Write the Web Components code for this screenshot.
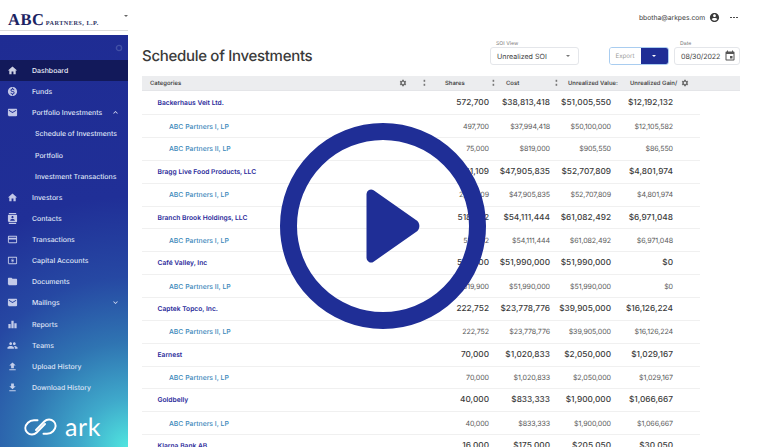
<!DOCTYPE html>
<html lang="en"><head><meta charset="utf-8"><title>Schedule of Investments</title>
<style>
html,body{margin:0;height:447px;overflow:hidden;background:#fff;font-family:Inter,"Liberation Sans",sans-serif;text-rendering:geometricPrecision}
</style></head><body>
<app-shell></app-shell>
<script>
const P={
home:'M10 20v-6h4v6h5v-8h3L12 3 2 12h3v8z',
money:'M12 2C6.48 2 2 6.48 2 12s4.48 10 10 10 10-4.48 10-10S17.52 2 12 2zm1.41 16.09V20h-2.67v-1.93c-1.71-.36-3.16-1.46-3.27-3.4h1.96c.1 1.05.82 1.87 2.65 1.87 1.96 0 2.4-.98 2.4-1.59 0-.83-.44-1.61-2.67-2.14-2.48-.6-4.18-1.62-4.18-3.67 0-1.72 1.39-2.84 3.11-3.21V4h2.67v1.95c1.86.45 2.79 1.86 2.85 3.39H14.3c-.05-1.11-.64-1.87-2.22-1.87-1.5 0-2.4.68-2.4 1.64 0 .84.65 1.39 2.67 1.91s4.18 1.39 4.18 3.91c-.01 1.83-1.38 2.83-3.12 3.16z',
mail:'M20 4H4c-1.1 0-1.99.9-1.99 2L2 18c0 1.1.9 2 2 2h16c1.1 0 2-.9 2-2V6c0-1.1-.9-2-2-2zm0 4l-8 5-8-5V6l8 5 8-5v2z',
contacts:'M20 0H4v2h16V0zM4 24h16v-2H4v2zM20 4H4c-1.1 0-2 .9-2 2v12c0 1.1.9 2 2 2h16c1.1 0 2-.9 2-2V6c0-1.1-.9-2-2-2zm-8 2.75c1.24 0 2.25 1.01 2.25 2.25s-1.01 2.25-2.25 2.25S9.75 10.24 9.75 9 10.76 6.75 12 6.75zM17 17H7v-1.5c0-1.67 3.33-2.5 5-2.5s5 .83 5 2.5V17z',
card:'M20 4H4c-1.11 0-1.99.89-1.99 2L2 18c0 1.11.89 2 2 2h16c1.11 0 2-.89 2-2V6c0-1.11-.89-2-2-2zm0 14H4v-6h16v6zm0-10H4V6h16v2z',
account:'M2 6v12c0 1.1.9 2 2 2h16c1.1 0 2-.9 2-2V6c0-1.1-.9-2-2-2H4c-1.1 0-2 .9-2 2zm2 0h16v12H4V6zm7 2v1.1c-1.1.2-2 .9-2 2 0 1.3 1.1 1.7 2.4 2 .9.2 1.2.4 1.2.8s-.5.6-1.1.6c-.8 0-1.2-.4-1.3-.9H9c.1 1 .9 1.7 2 1.9V16h2v-1.1c1.1-.2 2-.9 2-2 0-1.4-1.2-1.8-2.4-2.1-.9-.2-1.2-.4-1.2-.7s.4-.6 1-.6c.7 0 1 .3 1.1.8h1.3c-.1-1-.8-1.6-1.8-1.8V8h-2z',
folder:'M10 4H4c-1.1 0-1.99.9-1.99 2L2 18c0 1.1.9 2 2 2h16c1.1 0 2-.9 2-2V8c0-1.1-.9-2-2-2h-8l-2-2z',
bars:'M3 11h5v9H3zM9.5 4h5v16h-5zM16 9h5v11h-5z',
teams:'M16 11c1.66 0 2.99-1.34 2.99-3S17.66 5 16 5c-1.66 0-3 1.34-3 3s1.34 3 3 3zm-8 0c1.66 0 2.99-1.34 2.99-3S9.66 5 8 5C6.34 5 5 6.34 5 8s1.34 3 3 3zm0 2c-2.33 0-7 1.17-7 3.5V19h14v-2.5c0-2.33-4.67-3.5-7-3.5zm8 0c-.29 0-.62.02-.97.05 1.16.84 1.97 1.97 1.97 3.45V19h6v-2.5c0-2.33-4.67-3.5-7-3.5z',
upload:'M9 16h6v-6h4l-7-7-7 7h4zm-4 2h14v2H5z',
download:'M19 9h-4V3H9v6H5l7 7 7-7zM5 18v2h14v-2H5z',
user:'M12 2C6.48 2 2 6.48 2 12s4.48 10 10 10 10-4.48 10-10S17.52 2 12 2zm0 3c1.66 0 3 1.34 3 3s-1.34 3-3 3-3-1.34-3-3 1.34-3 3-3zm0 14.2c-2.5 0-4.71-1.28-6-3.22.03-1.99 4-3.08 6-3.08 1.99 0 5.97 1.09 6 3.08-1.29 1.94-3.5 3.22-6 3.22z',
cal:'M17 12h-5v5h5v-5zM16 1v2H8V1H6v2H5c-1.11 0-1.99.9-1.99 2L3 19c0 1.1.89 2 2 2h14c1.1 0 2-.9 2-2V5c0-1.1-.9-2-2-2h-1V1h-2zm3 18H5V8h14v11z',
gear:'M19.43 12.98c.04-.32.07-.64.07-.98s-.03-.66-.07-.98l2.11-1.65c.19-.15.24-.42.12-.64l-2-3.46c-.12-.22-.39-.3-.61-.22l-2.49 1c-.52-.4-1.08-.73-1.69-.98l-.38-2.65C14.46 2.18 14.25 2 14 2h-4c-.25 0-.46.18-.49.42l-.38 2.65c-.61.25-1.17.59-1.69.98l-2.49-1c-.23-.09-.49 0-.61.22l-2 3.46c-.13.22-.07.49.12.64l2.11 1.65c-.04.32-.07.65-.07.98s.03.66.07.98l-2.11 1.65c-.19.15-.24.42-.12.64l2 3.46c.12.22.39.3.61.22l2.49-1c.52.4 1.08.73 1.69.98l.38 2.65c.03.24.24.42.49.42h4c.25 0 .46-.18.49-.42l.38-2.65c.61-.25 1.17-.59 1.69-.98l2.49 1c.23.09.49 0 .61-.22l2-3.46c.12-.22.07-.49-.12-.64l-2.11-1.65zM12 15.5c-1.93 0-3.5-1.57-3.5-3.5s1.57-3.5 3.5-3.5 3.5 1.57 3.5 3.5-1.57 3.5-3.5 3.5z',
up:'M7.4 15.4 12 10.8l4.6 4.6L18 14l-6-6-6 6z',
down:'M7.4 8.6 12 13.2l4.6-4.6L18 10l-6 6-6-6z'
};
const ico=(n,s,c='currentColor',extra='')=>`<svg width="${s}" height="${s}" viewBox="0 0 24 24" fill="${c}" style="display:block;flex:none;${extra}"><path d="${P[n]}"/></svg>`;
const dots=(c='#777')=>`<svg width="3" height="8" viewBox="0 0 3 8" style="display:block;flex:none"><rect x=".6" y=".8" width="1.6" height="2" fill="${c}"/><rect x=".6" y="4.8" width="1.6" height="2" fill="${c}"/></svg>`;
const def=(name,css,html)=>customElements.define(name,class extends HTMLElement{
  connectedCallback(){ if(this.shadowRoot)return; const r=this.attachShadow({mode:'open'});
    r.innerHTML=`<style>${css}</style>`+(typeof html==='function'?html(this):html); }
});

def('abc-logo',`:host{display:flex;align-items:baseline;color:#1b2362;font-family:"Liberation Serif",serif;white-space:nowrap}
.a{font-size:16.5px;font-weight:700;letter-spacing:.6px}.b{font-size:6.2px;font-weight:700;letter-spacing:.5px;margin-left:1px;color:#2a2f5e}`,
`<span class="a">ABC</span><span class="b">PARTNERS, L.P.</span>`);

def('nav-item',`:host{display:flex;flex:none;align-items:center;height:21.13px;color:#dfe3f6;font-size:6.95px;font-weight:500;box-sizing:border-box;white-space:nowrap}
:host([active]){background:#12195a;color:#eef0fb}
.i{width:32px;display:flex;justify-content:center;padding-right:7px;box-sizing:border-box;opacity:.85}
:host([sub]) .i{width:35px}
.t{flex:1}.c{margin-right:8px;display:block}`,
h=>`<span class="i">${h.hasAttribute('icon')?ico(h.getAttribute('icon'),11):''}</span><span class="t"><slot></slot></span>${h.hasAttribute('chev')?`<span class="c">${ico(h.getAttribute('chev'),9)}</span>`:''}`);

def('side-nav',`:host{display:flex;flex-direction:column;width:128px;flex:none;color:#fff;position:relative;overflow:hidden;
background:radial-gradient(circle at 100% 100%,#50e5df 0,#3fa9cb 48px,#2f74b2 105px,#2648a3 170px,#202f97 250px,#1f2c93 100%)}
.collapse{height:25px;flex:none;display:flex;justify-content:flex-end;align-items:center;padding:0 5px 0 0;box-sizing:border-box}
.collapse svg{display:block}
.brand{margin-top:auto;display:flex;align-items:center;gap:8px;padding:0 0 9px 24px}
.ark{font-family:Lato,sans-serif;font-size:25px;font-weight:400;line-height:22px;letter-spacing:.6px;color:#fff}`,
`<div class="collapse"><svg width="8" height="8" viewBox="0 0 8 8"><circle cx="4" cy="4" r="2.6" fill="none" stroke="#4250a6" stroke-width="1.4"/></svg></div>
<nav-item active icon="home">Dashboard</nav-item>
<nav-item icon="money">Funds</nav-item>
<nav-item icon="mail" chev="up">Portfolio Investments</nav-item>
<nav-item sub>Schedule of Investments</nav-item>
<nav-item sub>Portfolio</nav-item>
<nav-item sub>Investment Transactions</nav-item>
<nav-item icon="home">Investors</nav-item>
<nav-item icon="contacts">Contacts</nav-item>
<nav-item icon="card">Transactions</nav-item>
<nav-item icon="account">Capital Accounts</nav-item>
<nav-item icon="folder">Documents</nav-item>
<nav-item icon="mail" chev="down">Mailings</nav-item>
<nav-item icon="bars">Reports</nav-item>
<nav-item icon="teams">Teams</nav-item>
<nav-item icon="upload">Upload History</nav-item>
<nav-item icon="download">Download History</nav-item>
<div class="brand"><svg width="33" height="20" viewBox="0 0 33 20" fill="none" stroke="#fff" stroke-width="2" stroke-linecap="round"><path d="M13.5 3.200H10a8.600 8.600 0 0 0-6.100 2.600c-3.300 3.300-3.300 7.100-.6 9.800 2.700 2.700 6.700 2.600 9.400-.1L21 7"/><path d="M19.500 16.800H23a8.600 8.600 0 0 0 6.100-2.600c3.300-3.300 3.300-7.100.6-9.800-2.700-2.700-6.700-2.600-9.400.1L12 13"/></svg><span class="ark">ark</span></div>`);

def('side-head',`:host{display:flex;height:35px;width:128px;flex:none;box-sizing:border-box}
.in{flex:none;width:128px;height:31px;border-bottom:1px solid #dcdcdc;display:flex;align-items:center;padding:10px 0 0 8px;box-sizing:border-box;justify-content:space-between}
.caret{width:0;height:0;border:2px solid transparent;border-top:2.5px solid #666;margin:0 0 6px 0}`,
`<div class="in"><abc-logo></abc-logo><span class="caret"></span></div>`);

def('top-bar',`:host{display:flex;flex:none;justify-content:flex-end;align-items:center;gap:4px;height:35px;padding:0 30px 0 0;box-sizing:border-box;color:#3b3b3b;font-size:6.75px}
.more{margin-left:5.500px;display:flex;gap:1.300px}
.more i{display:block;width:1.900px;height:1.900px;border-radius:50%;background:#333}`,
`<span class="mail">bbotha@arkpes.com</span>${ico('user',11,'#3a3a3a')}<span class="more"><i></i><i></i><i></i></span>`);

def('field-box',`:host{display:block;position:relative;box-sizing:border-box;height:18px;border:1px solid #e4e6ea;border-radius:3px;background:#fff;font-size:7.1px;color:#444}
.lab{position:absolute;left:5px;top:-7.500px;font-size:5.200px;color:#777;line-height:6px}
.b{display:flex;align-items:center;height:100%;padding:0 3px 0 5px;box-sizing:border-box;justify-content:space-between}`,
h=>`<span class="lab">${h.getAttribute('label')}</span><div class="b"><slot></slot></div>`);

def('export-btn',`:host{display:flex;height:18px;width:60px;border-radius:3px;box-sizing:border-box;border:1px solid #a9cdf0;overflow:hidden;font-size:6.200px;color:#9a9a9a}
.l{flex:1;display:flex;align-items:center;justify-content:center;background:#fff}
.r{width:27px;background:#1f2e96;display:flex;align-items:center;justify-content:center}
.r i{display:block;border:2.300px solid transparent;border-top:2.600px solid #fff;margin-top:2.500px}`,
`<span class="l">Export</span><span class="r"><i></i></span>`);

def('page-toolbar',`:host{display:flex;flex:none;align-items:flex-start;height:40.500px;box-sizing:border-box;padding:12px 28px 0 14px}
h1{margin:0;font-size:15px;letter-spacing:-.3px;font-weight:500;color:#3a3a3a;line-height:18px;flex:1}
.sel{width:89px;margin-right:29.500px}.date{width:66px;margin-left:5.500px}
.sel span:first-child{padding-left:1px}
.ct{display:block;border:2.100px solid transparent;border-top:2.500px solid #777;margin:2px 5px 0 0}
.d{letter-spacing:-.1px;padding-left:1px}
field-box span{white-space:nowrap}`,
`<h1>Schedule of Investments</h1>
<field-box class="sel" label="SOI View"><span>Unrealized SOI</span><span class="ct"></span></field-box>
<export-btn></export-btn>
<field-box class="date" label="Date"><span class="d">08/30/2022</span>${ico('cal',12,'#555')}</field-box>`);

def('table-row',`:host{display:grid;grid-template-columns:1fr 61px 61px 61px 62px;align-items:center;height:22.870px;padding-right:27px;box-sizing:border-box;width:558px;border-bottom:1px solid #f0f0f0;white-space:nowrap}
.n{padding-left:15.500px;font-size:6.700px;font-weight:600;color:#2a2a9a}
.v{text-align:right;font-size:8.300px;font-weight:500;color:#3c3c3c}
:host([child]) .n{padding-left:27px;font-weight:500;font-size:6.850px;color:#3a87ba}
:host([child]) .v{font-size:7.100px;letter-spacing:-.1px;font-weight:400;color:#5a5a5a}`,
h=>{const d=h.getAttribute('d').split('|');return `<span class="n">${d[0]}</span>`+d.slice(1).map(x=>`<span class="v">${x}</span>`).join('')});

const ROWS=[
['Backerhaus Veit Ltd.','572,700','$38,813,418','$51,005,550','$12,192,132'],
['*ABC Partners I, LP','497,700','$37,994,418','$50,100,000','$12,105,582'],
['*ABC Partners II, LP','75,000','$819,000','$905,550','$86,550'],
['Bragg Live Food Products, LLC','2,351,109','$47,905,835','$52,707,809','$4,801,974'],
['*ABC Partners I, LP','2,351,109','$47,905,835','$52,707,809','$4,801,974'],
['Branch Brook Holdings, LLC','518,252','$54,111,444','$61,082,492','$6,971,048'],
['*ABC Partners I, LP','518,252','$54,111,444','$61,082,492','$6,971,048'],
['Café Valley, Inc','519,900','$51,990,000','$51,990,000','$0'],
['*ABC Partners II, LP','519,900','$51,990,000','$51,990,000','$0'],
['Captek Topco, Inc.','222,752','$23,778,776','$39,905,000','$16,126,224'],
['*ABC Partners II, LP','222,752','$23,778,776','$39,905,000','$16,126,224'],
['Earnest','70,000','$1,020,833','$2,050,000','$1,029,167'],
['*ABC Partners I, LP','70,000','$1,020,833','$2,050,000','$1,029,167'],
['Goldbelly','40,000','$833,333','$1,900,000','$1,066,667'],
['*ABC Partners I, LP','40,000','$833,333','$1,900,000','$1,066,667'],
['Klarna Bank AB','16,000','$175,000','$205,050','$30,050']];

def('table-head',`:host{display:grid;grid-template-columns:257px 24px 22px 47px 14px 49px 13px 62px 51px 1fr;align-items:center;height:15px;background:#ecedef;font-size:5.900px;font-weight:600;color:#4b4b4b;white-space:nowrap;box-shadow:inset 0 -1px 0 #e4e5e8}
span{display:flex;align-items:center}.c{padding-left:8px}`,
`<span class="c">Categories</span><span>${ico('gear',8,'#6d6d6d')}</span><span>${dots()}</span><span>Shares</span><span>${dots()}</span><span>Cost</span><span>${dots()}</span><span>Unrealized Value:</span><span>Unrealized Gain/</span><span>${ico('gear',8,'#6d6d6d')}</span>`);

def('invest-table',`:host{display:block;flex:none;margin:0 28px 0 14px}
.rows{display:block;margin-top:1.800px}`,
`<table-head></table-head><div class="rows">${ROWS.map(r=>{const c=r[0][0]==='*';if(c)r=[r[0].slice(1),...r.slice(1)];return `<table-row ${c?'child':''} d="${r.join('|')}"></table-row>`}).join('')}</div>`);

def('play-overlay',`:host{position:absolute;left:280px;top:123px;width:206px;height:206px;display:block}
svg{display:block}`,
`<svg width="206" height="206" viewBox="0 0 206 206"><circle cx="103" cy="103" r="94.500" fill="none" stroke="#1f2e96" stroke-width="17"/><path d="M86.500 71a4.500 4.500 0 0 1 7.100-3.700L136 97a7 7 0 0 1 0 12L93.600 138.700a4.500 4.500 0 0 1-7.100-3.700z" fill="#1f2e96"/></svg>`);

def('app-shell',`:host{display:flex;width:768px;height:447px;position:relative;overflow:hidden;background:#fff}
.left{display:flex;flex-direction:column;width:128px;flex:none;height:447px}
side-nav{flex:1}
.main{flex:1;min-width:0;display:flex;flex-direction:column}`,
`<div class="left"><side-head></side-head><side-nav></side-nav></div>
<div class="main"><top-bar></top-bar><page-toolbar></page-toolbar><invest-table></invest-table></div>
<play-overlay></play-overlay>`);
</script>
</body></html>
